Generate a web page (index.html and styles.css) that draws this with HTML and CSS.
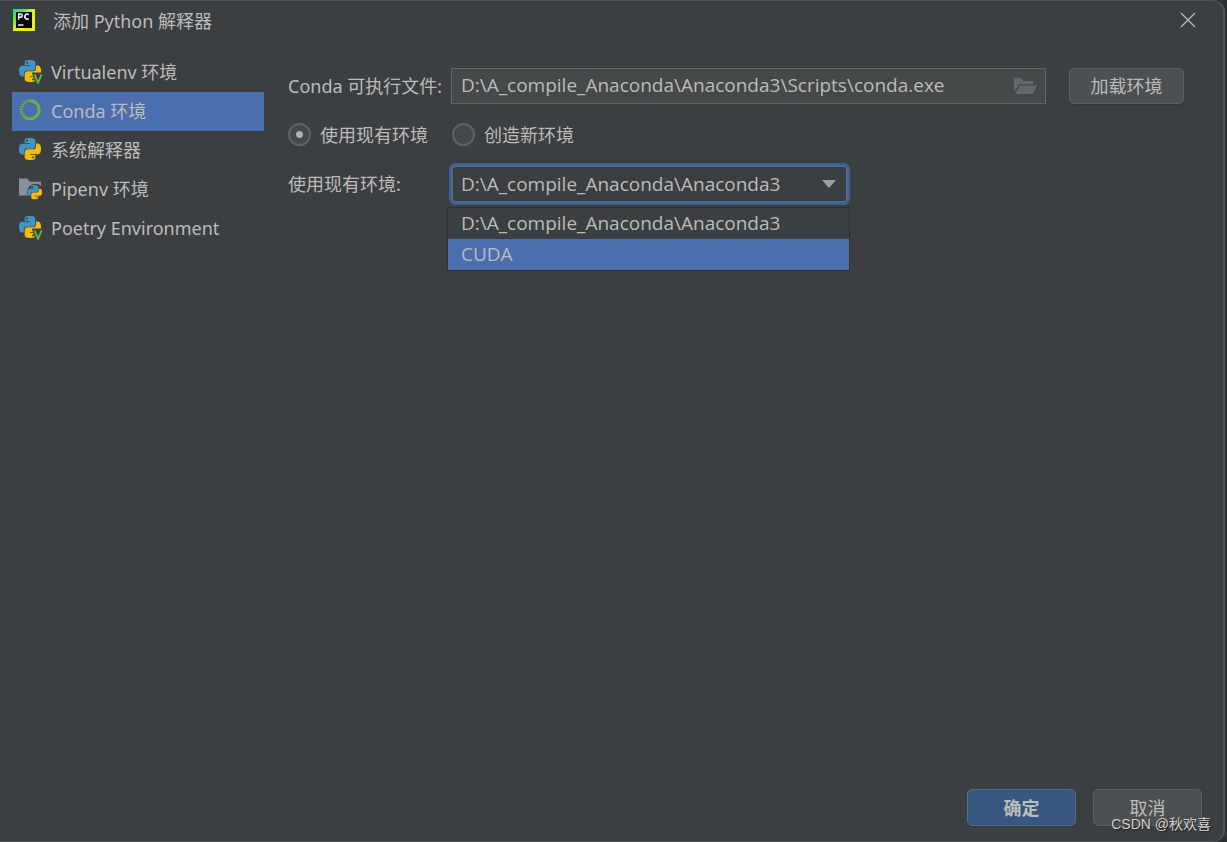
FILE: index.html
```html
<!DOCTYPE html>
<html lang="zh-CN">
<head>
<meta charset="utf-8">
<meta name="viewport" content="width=device-width, initial-scale=1">
<title>添加 Python 解释器</title>
<link rel="stylesheet" href="styles.css">
</head>
<body>
<svg class="defs" aria-hidden="true">
  <defs>
    <linearGradient id="pc-frame" x1="0" y1="0" x2="1" y2="1">
      <stop offset="0" stop-color="#21d7a9"/>
      <stop offset=".25" stop-color="#5be23c"/>
      <stop offset=".5" stop-color="#e6ee1c"/>
      <stop offset="1" stop-color="#e9ee1d"/>
    </linearGradient>
    <path id="snake" d="M14.25.18l.9.2.73.26.59.3.45.32.34.34.25.34.16.33.1.3.04.26.02.2-.01.13V8.5l-.05.63-.13.55-.21.46-.26.38-.3.31-.33.25-.35.19-.35.14-.33.1-.3.07-.26.04-.21.02H8.77l-.69.05-.59.14-.5.22-.41.27-.33.32-.27.35-.2.36-.15.37-.1.35-.07.32-.04.27-.02.21v3.06H3.17l-.21-.03-.28-.07-.32-.12-.35-.18-.36-.26-.36-.36-.35-.46-.32-.59-.28-.73-.21-.88-.14-1.05-.05-1.23.06-1.22.16-1.04.24-.87.32-.71.36-.57.4-.44.42-.33.42-.24.4-.16.36-.1.32-.05.24-.01h.16l.06.01h8.16v-.83H6.18l-.01-2.75-.02-.37.05-.34.11-.31.17-.28.25-.26.31-.23.38-.2.44-.18.51-.15.58-.12.64-.1.71-.06.77-.04.84-.02 1.27.05zm-6.3 1.98l-.23.33-.08.41.08.41.23.34.33.22.41.09.41-.09.33-.22.23-.34.08-.41-.08-.41-.23-.33-.33-.22-.41-.09-.41.09z"/>
    <symbol id="python" viewBox="0 0 24 24">
      <use href="#snake" fill="#3f94c3"/>
      <use href="#snake" fill="#f2bd05" transform="rotate(180 12 12)"/>
    </symbol>
    <symbol id="python-venv" viewBox="0 0 24 24">
      <use href="#python" x="0" y="0" width="22" height="22"/>
      <path d="M12.8 12.5h11.2v11.5h-7.2z" fill="#3c3f41"/>
      <path d="M15.4 14.4l3.6 8.2 3.7-8.2" fill="none" stroke="#62b543" stroke-width="1.9"/>
    </symbol>
  </defs>
</svg>

<div class="dialog" role="dialog" aria-labelledby="dialog-title">
  <header class="titlebar">
    <svg class="app-icon" viewBox="0 0 22 22" aria-hidden="true">
      <rect width="22" height="22" fill="url(#pc-frame)"/>
      <rect x="3" y="3" width="16" height="16" fill="#050805"/>
      <path d="M5.7 10.4V5h1.9a1.6 1.6 0 0 1 0 3.3H5.7M15.8 5.6a2.5 2.5 0 1 0 0 4.1" fill="none" stroke="#fff" stroke-width="1.5"/>
      <path d="M5 16h5.5" stroke="#fff" stroke-width="1.4"/>
    </svg>
    <h1 class="title" id="dialog-title">添加 Python 解释器</h1>
    <button class="close" type="button" aria-label="关闭">
      <svg viewBox="0 0 16 16" aria-hidden="true"><path d="M1 1l14 14M15 1L1 15" stroke="#b4b6b7" stroke-width="1.4"/></svg>
    </button>
  </header>

  <div class="content">
    <nav class="sidebar">
      <a class="nav-item" href="#virtualenv"><svg class="nav-icon" aria-hidden="true"><use href="#python-venv"/></svg>Virtualenv 环境</a>
      <a class="nav-item selected" href="#conda" aria-current="page">
        <svg class="nav-icon" viewBox="0 0 24 24" aria-hidden="true">
          <g fill="none" stroke="#62b543">
            <path d="M11 1.8a9 9 0 1 1-5.6 16" stroke-width="3"/>
            <path d="M5.4 17.8A9 9 0 0 1 11 1.8" stroke-width="2.8" stroke-dasharray="1.6 .9"/>
            <path d="M5.8 16A7.3 7.3 0 0 1 7 4.5" stroke-width="1.2" stroke-dasharray="1.2 1.7"/>
          </g>
        </svg>Conda 环境</a>
      <a class="nav-item" href="#system"><svg class="nav-icon" viewBox="0 0 24 24" aria-hidden="true"><use href="#python" x="0" y="0" width="22" height="22"/></svg>系统解释器</a>
      <a class="nav-item" href="#pipenv">
        <svg class="nav-icon" viewBox="0 0 24 24" aria-hidden="true">
          <path d="M0 1.5h8l3 3.2h11V18.5H0z" fill="#87939a"/>
          <circle cx="16.5" cy="15.2" r="8.4" fill="#3c3f41"/>
          <use href="#python" x="8.5" y="8" width="14.5" height="14.5"/>
        </svg>Pipenv 环境</a>
      <a class="nav-item" href="#poetry"><svg class="nav-icon" aria-hidden="true"><use href="#python-venv"/></svg>Poetry Environment</a>
    </nav>

    <form class="panel" id="conda-form">
      <div class="row">
        <label class="label" for="conda-path">Conda 可执行文件:</label>
        <div class="path-field">
          <input class="path-input" id="conda-path" type="text" value="D:\A_compile_Anaconda\Anaconda3\Scripts\conda.exe" spellcheck="false">
          <button class="browse" type="button" aria-label="浏览">
            <svg viewBox="0 0 24 18" aria-hidden="true"><path d="M1 15V1h7l2.5 3H20v3.2H6.2z" fill="#61696d"/><path d="M7 8.5h17L20 17H2z" fill="#61696d"/></svg>
          </button>
        </div>
        <button class="button load" type="button">加载环境</button>
      </div>
      <div class="row radios">
        <label class="radio"><input type="radio" name="env" checked>使用现有环境</label>
        <label class="radio"><input type="radio" name="env">创造新环境</label>
      </div>
      <div class="row">
        <label class="label" for="env-select">使用现有环境:</label>
        <div class="combo">
          <select class="combo-select" id="env-select">
            <option>D:\A_compile_Anaconda\Anaconda3</option>
            <option>CUDA</option>
          </select>
          <svg class="combo-arrow" viewBox="0 0 14 8" aria-hidden="true"><path d="M0 0h14L7 8z" fill="#9da0a2"/></svg>
          <ul class="popup" role="listbox" aria-label="使用现有环境">
            <li class="option" role="option" aria-selected="false">D:\A_compile_Anaconda\Anaconda3</li>
            <li class="option active" role="option" aria-selected="true">CUDA</li>
          </ul>
        </div>
      </div>
    </form>
  </div>

  <footer class="footer">
    <button class="button primary" type="submit" form="conda-form">确定</button>
    <button class="button" type="button">取消</button>
  </footer>
  <span class="watermark">CSDN @秋欢喜</span>
</div>
</body>
</html>
```
FILE: styles.css
```css
* {
  box-sizing: border-box;
}

body {
  margin: 0;
  min-height: 100vh;
  display: flex;
  background: #2e3032;
  color: #bbbbbb;
  font: 18px/24px "Noto Sans", "Noto Sans CJK SC", sans-serif;
}

button,
input,
select {
  font: inherit;
  color: inherit;
}

.defs {
  position: absolute;
  width: 0;
  height: 0;
}

.dialog {
  position: relative;
  flex: 1;
  display: flex;
  flex-direction: column;
  margin-right: 2px;
  background: #3c3f41;
  border: solid #515456;
  border-width: 1px 2px 1px 0;
  border-radius: 0 12px 12px 0;
}

.titlebar {
  display: flex;
  align-items: center;
  height: 38px;
  padding: 0 27px 0 13px;
}

.app-icon {
  width: 22px;
  height: 22px;
}

.title {
  flex: 1;
  margin: 2px 0 0 18px;
  font-size: 18px;
  font-weight: 400;
}

.close {
  display: flex;
  padding: 0;
  border: 0;
  background: none;
}

.close svg {
  width: 16px;
  height: 16px;
}

.content {
  flex: 1;
  display: flex;
  gap: 24px;
  padding: 14px 39px 0 12px;
}

.sidebar {
  width: 252px;
}

.nav-item {
  display: flex;
  align-items: center;
  gap: 8px;
  height: 39px;
  padding: 0 0 1px 7px;
  color: inherit;
  text-decoration: none;
}

.nav-item.selected {
  background: #4b6eaf;
}

.nav-icon {
  width: 24px;
  height: 24px;
}

.panel {
  flex: 1;
  display: flex;
  flex-direction: column;
  gap: 17px;
  padding-top: 15px;
}

.row {
  display: flex;
  align-items: center;
}

.label {
  width: 163px;
  white-space: nowrap;
}

.path-field {
  flex: 1;
  display: flex;
  align-items: center;
  height: 36px;
  border: 1px solid #646464;
  background: #45494a;
}

.path-input,
.combo-select,
.option {
  font-family: "Open Sans", "Noto Sans CJK SC", sans-serif;
  font-size: 19px;
}

.path-input {
  flex: 1;
  min-width: 0;
  height: 34px;
  padding: 0 9px 2px;
  border: 0;
  outline: 0;
  background: none;
}

.browse {
  display: flex;
  padding: 0 8px 0 0;
  border: 0;
  background: none;
}

.browse svg {
  width: 24px;
  height: 18px;
}

.button {
  width: 109px;
  height: 37px;
  padding: 0;
  border: 1px solid #5e6060;
  border-radius: 5px;
  background: #4c5052;
  box-shadow: 0 1px 1px #35383a;
}

.button.load {
  width: 115px;
  height: 36px;
  margin-left: 23px;
}

.button.primary {
  border-color: #4c708c;
  background: #365880;
  font-weight: 700;
}

.radios {
  gap: 24px;
  height: 27px;
}

.radio {
  display: flex;
  align-items: center;
  gap: 9px;
}

.radio input {
  appearance: none;
  width: 23px;
  height: 23px;
  margin: 0;
  border: 2px solid #5e6264;
  border-radius: 50%;
  background: #43494a;
}

.radio input:checked {
  background: radial-gradient(circle, #adadad 3px, #43494a 4px);
}

.combo {
  position: relative;
  width: 397px;
}

.combo-select {
  appearance: none;
  display: block;
  width: 100%;
  height: 38px;
  padding: 0 8px;
  border: 2px solid #466d94;
  border-radius: 4px;
  outline: 2px solid #3d6185;
  background: #3c3f41;
}

.combo-arrow {
  position: absolute;
  top: 15px;
  right: 12px;
  width: 14px;
  height: 8px;
  pointer-events: none;
}

.popup {
  position: absolute;
  top: 100%;
  left: -4px;
  right: -2px;
  margin: 4px 0 0;
  padding: 0;
  border: 1px solid #2f3133;
  background: #3c3f41;
  list-style: none;
}

.option {
  padding: 0 13px;
  line-height: 31px;
}

.option.active {
  background: #4b6eaf;
}

.footer {
  display: flex;
  justify-content: flex-end;
  gap: 17px;
  padding: 0 21px 15px;
}

.watermark {
  position: absolute;
  right: 12px;
  bottom: 7px;
  color: #cfcfcf;
  font-family: "Liberation Sans", "Noto Sans CJK SC", sans-serif;
  font-size: 14px;
  line-height: 20px;
  text-shadow: 1px 1px 1px #222222;
}
```
